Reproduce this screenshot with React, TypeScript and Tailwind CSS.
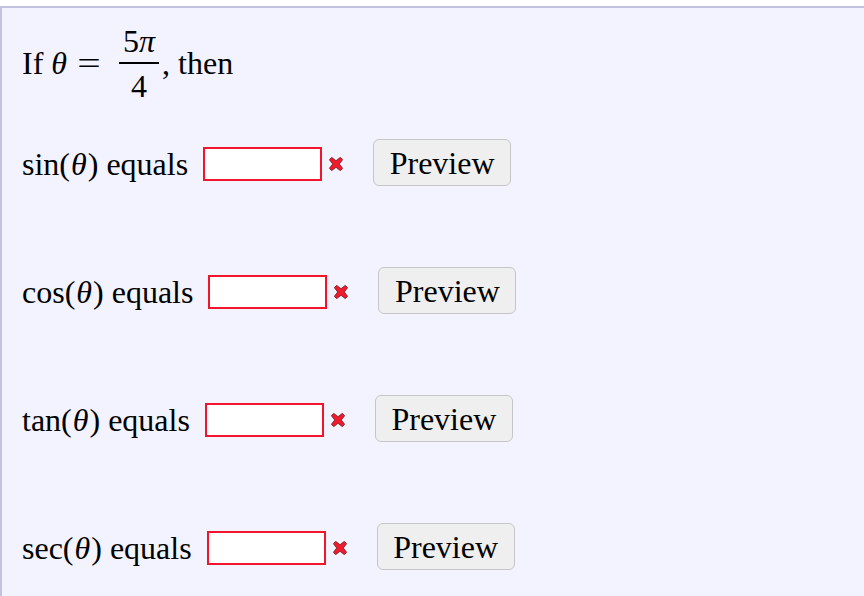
import React from 'react'

const SERIF = "font-['Liberation_Serif','Times_New_Roman',serif]"

// Red "heavy multiplication x" marker shown after an unanswered blank
function WrongMark() {
  return (
    <svg width="14" height="14" viewBox="0 0 12 12" className="ml-[7px] mt-[1px] shrink-0">
      <polygon
        points="2.3,0.3 6,3.2 9.7,0.3 11.7,2.3 8.8,6 11.7,9.7 9.7,11.7 6,8.8 2.3,11.7 0.3,9.7 3.2,6 0.3,2.3"
        fill="#ee1c2c"
        stroke="#5e0b10"
        strokeWidth="0.6"
        strokeLinejoin="round"
      />
    </svg>
  )
}

interface AnswerRowProps {
  fn: string
}

function AnswerRow({ fn }: AnswerRowProps) {
  return (
    <div className="flex h-[48px] items-center">
      <span className="whitespace-pre leading-[36px]">
        {fn}(<i className="mx-[1px]">θ</i>) equals
      </span>
      <input
        type="text"
        className="ml-[15px] h-[34px] w-[119px] shrink-0 border-2 border-[#f2142a] bg-white outline-none"
      />
      <WrongMark />
      <button
        type="button"
        className={`${SERIF} mb-[2px] ml-[30px] flex h-[47px] w-[138px] shrink-0 items-center justify-center rounded-[6px] border-[1.5px] border-[#c6c6c6] bg-[#efefef] text-[32px] leading-[36px] text-black`}
      >
        Preview
      </button>
    </div>
  )
}

export default function App() {
  return (
    <div className="min-h-[596px] bg-white pt-[6px]">
      <div
        className={`${SERIF} h-[590px] border-l-2 border-t-2 border-[#c1c1e0] bg-[#f3f3ff] pl-[20px] pt-[17px] text-[32px] text-black`}
      >
        {/* Problem statement: If θ = 5π/4, then */}
        <div className="flex items-center leading-[36px]">
          <span>If</span>
          <i className="ml-[8px]">θ</i>
          <span className="ml-[13px] inline-block scale-x-[1.3]">=</span>
          <span className="ml-[21px] inline-flex w-[40px] flex-col items-center">
            <span className="h-[32px] leading-[32px]">
              5<i>π</i>
            </span>
            <span className="mb-[6px] mt-[5px] h-[1.5px] w-full bg-black" />
            <span className="h-[32px] leading-[32px]">4</span>
          </span>
          <span className="ml-[3px] whitespace-pre">, then</span>
        </div>

        <div className="mt-[38px] flex flex-col gap-[80px]">
          <AnswerRow fn="sin" />
          <AnswerRow fn="cos" />
          <AnswerRow fn="tan" />
          <AnswerRow fn="sec" />
        </div>
      </div>
    </div>
  )
}
